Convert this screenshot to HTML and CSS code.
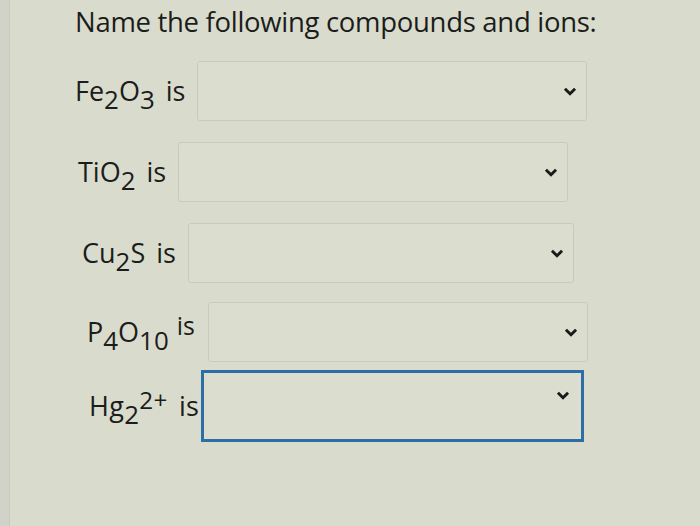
FILE: index.html
```html
<!DOCTYPE html>
<html>
<head>
<meta charset="utf-8">
<link rel="stylesheet" href="styles.css">
</head>
<body>
<div class="page">
  <div class="edge"></div>
  <main class="content">
    <h1 class="title">Name the following compounds and ions:</h1>
    <div class="rows">
      <div class="row r1">
        <span class="label">Fe<sub>2</sub>O<sub>3</sub> is</span>
        <div class="select"><svg class="chev" viewBox="0 0 12 8"><path d="M1.5 1.5 L6 6 L10.5 1.5" /></svg></div>
      </div>
      <div class="row r2">
        <span class="label">TiO<sub>2</sub> is</span>
        <div class="select"><svg class="chev" viewBox="0 0 12 8"><path d="M1.5 1.5 L6 6 L10.5 1.5" /></svg></div>
      </div>
      <div class="row r3">
        <span class="label">Cu<sub>2</sub>S is</span>
        <div class="select"><svg class="chev" viewBox="0 0 12 8"><path d="M1.5 1.5 L6 6 L10.5 1.5" /></svg></div>
      </div>
      <div class="row r4">
        <span class="label">P<sub>4</sub>O<sub>10</sub> <span class="up">is</span></span>
        <div class="select"><svg class="chev" viewBox="0 0 12 8"><path d="M1.5 1.5 L6 6 L10.5 1.5" /></svg></div>
      </div>
      <div class="row r5">
        <span class="label">Hg<sub>2</sub><sup>2+</sup> is</span>
        <div class="select focused"><svg class="chev" viewBox="0 0 12 8"><path d="M1.5 1.5 L6 6 L10.5 1.5" /></svg></div>
      </div>
    </div>
  </main>
</div>
</body>
</html>
```
FILE: styles.css
```css
* { box-sizing: border-box; }
html, body { margin: 0; padding: 0; }
body {
  width: 700px;
  height: 526px;
  overflow: hidden;
  background: #d9dccd;
  font-family: "Open Sans", "Noto Sans", sans-serif;
  color: #1c1c1c;
}
.page {
  display: flex;
  height: 526px;
}
.edge {
  width: 10px;
  background: #d1d3c8;
  border-right: 1px solid #c9cbc0;
}
.content {
  flex: 1;
  padding-left: 65px;
  padding-top: 3px;
}
.title {
  margin: 0;
  font-size: 27.5px;
  font-weight: 400;
  line-height: 38px;
  letter-spacing: -0.3px;
}
.rows {
  display: flex;
  flex-direction: column;
  gap: 21px;
  margin-top: 20px;
}
.row {
  display: flex;
  align-items: center;
  height: 60px;
}
.r2 { padding-left: 3px; }
.r3 { padding-left: 7px; }
.r4 { padding-left: 12px; margin-top: -2px; }
.r5 { padding-left: 14px; margin-top: -13px; height: 72px; }
.label {
  font-size: 27px;
  line-height: 30px;
  white-space: nowrap;
  margin-right: 12px;
  word-spacing: 4px;
}
.r4 .label { margin-right: 13px; word-spacing: 1px; }
.r5 .label { margin-right: 2px; word-spacing: 4px; letter-spacing: 0.3px; }
.label sub {
  font-size: 0.96em;
  vertical-align: -0.3em;
  line-height: 0;
}
.label sup {
  font-size: 0.9em;
  vertical-align: 0.3em;
  line-height: 0;
}
.label .up {
  position: relative;
  top: -7px;
  font-size: 0.92em;
}
.select {
  width: 390px;
  height: 60px;
  border: 1px solid #c8cabd;
  border-radius: 3px;
  background: #dbdecf;
  display: flex;
  align-items: center;
  justify-content: flex-end;
  padding-right: 9px;
}
.r3 .select { width: 386px; }
.r4 .select { width: 380px; }
.select.focused {
  height: 72px;
  border: 3px solid #2e6ea6;
  border-radius: 0;
  width: 383px;
  padding-right: 11px;
  align-items: flex-start;
  padding-top: 18px;
}
.chev {
  width: 14px;
  height: 9px;
  fill: none;
  stroke: #1a1a1a;
  stroke-width: 2.6;
}
```
